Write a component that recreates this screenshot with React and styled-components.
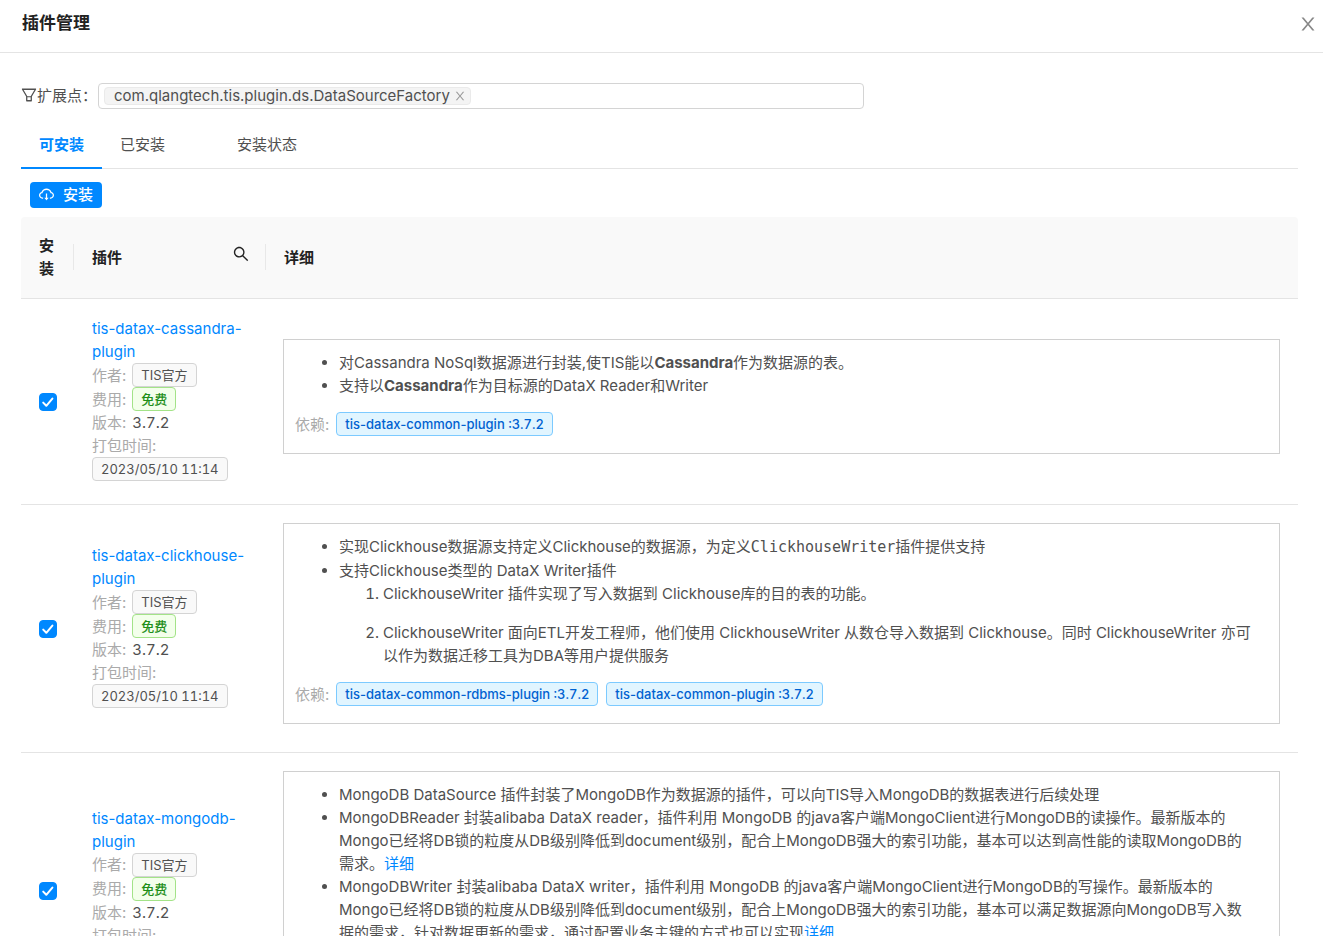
import React, { useState } from 'react';
import styled, { createGlobalStyle } from 'styled-components';
import { AiOutlineCloudDownload, AiOutlineFilter, AiOutlineSearch } from 'react-icons/ai';

const GlobalStyle = createGlobalStyle`
  *, *::before, *::after {
    box-sizing: border-box;
  }
  body {
    margin: 0;
    background: #fff;
    color: #505050;
    font-family: Inter, "Noto Sans CJK SC", sans-serif;
    font-size: 15px;
    line-height: 23px;
  }
  button, input {
    font: inherit;
  }
`;

const Link = styled.a`
  color: #0088ff;
  text-decoration: none;
`;

const VERSION = '3.7.2';

// the glyphs sit inside a 64 unit margin, crop it away
const ICON_BOX = '64 64 896 896';

const plugins = [
  {
    name: 'tis-datax-cassandra-plugin',
    deps: ['tis-datax-common-plugin'],
    detail: (
      <>
        <li>
          对Cassandra NoSql数据源进行封装,使TIS能以<strong>Cassandra</strong>作为数据源的表。
        </li>
        <li>
          支持以<strong>Cassandra</strong>作为目标源的DataX Reader和Writer
        </li>
      </>
    ),
  },
  {
    name: 'tis-datax-clickhouse-plugin',
    deps: ['tis-datax-common-rdbms-plugin', 'tis-datax-common-plugin'],
    detail: (
      <>
        <li>
          实现Clickhouse数据源支持定义Clickhouse的数据源，为定义<code>ClickhouseWriter</code>插件提供支持
        </li>
        <li>
          支持Clickhouse类型的 DataX Writer插件
          <ol>
            <li>ClickhouseWriter 插件实现了写入数据到 Clickhouse库的目的表的功能。</li>
            <li>
              ClickhouseWriter 面向ETL开发工程师，他们使用 ClickhouseWriter 从数仓导入数据到
              Clickhouse。同时 ClickhouseWriter 亦可以作为数据迁移工具为DBA等用户提供服务
            </li>
          </ol>
        </li>
      </>
    ),
  },
  {
    name: 'tis-datax-mongodb-plugin',
    deps: ['tis-datax-common-plugin'],
    detail: (
      <>
        <li>MongoDB DataSource 插件封装了MongoDB作为数据源的插件，可以向TIS导入MongoDB的数据表进行后续处理</li>
        <li>
          MongoDBReader 封装alibaba DataX reader，插件利用 MongoDB
          的java客户端MongoClient进行MongoDB的读操作。最新版本的Mongo已经将DB锁的粒度从DB级别降低到document级别，配合上MongoDB强大的索引功能，基本可以达到高性能的读取MongoDB的需求。
          <Link href="#reader">详细</Link>
        </li>
        <li>
          MongoDBWriter 封装alibaba DataX writer，插件利用 MongoDB
          的java客户端MongoClient进行MongoDB的写操作。最新版本的Mongo已经将DB锁的粒度从DB级别降低到document级别，配合上MongoDB强大的索引功能，基本可以满足数据源向MongoDB写入数据的需求，针对数据更新的需求，通过配置业务主键的方式也可以实现
          <Link href="#writer">详细</Link>
        </li>
      </>
    ),
  },
];

const CloseIcon = () => (
  <svg viewBox={ICON_BOX} width="1em" height="1em" fill="currentColor" aria-hidden="true">
    <path d="M563.8 512l262.5-312.9c4.4-5.2.7-13.1-6.1-13.1h-79.8c-4.7 0-9.2 2.1-12.3 5.7L511.6 449.8 295.1 191.7c-3-3.6-7.5-5.7-12.3-5.7H203c-6.8 0-10.5 7.9-6.1 13.1L459.4 512 196.9 824.9A7.95 7.95 0 00203 838h79.8c4.7 0 9.2-2.1 12.3-5.7l216.5-258.1 216.5 258.1c3 3.6 7.5 5.7 12.3 5.7h79.8c6.8 0 10.5-7.9 6.1-13.1L563.8 512z" />
  </svg>
);

const PluginRow = ({ plugin }) => {
  const [checked, setChecked] = useState(true);
  return (
    <tr>
      <Cell>
        <CheckLabel>
          <Checkbox
            aria-label={plugin.name}
            checked={checked}
            onChange={(e) => setChecked(e.target.checked)}
          />
          <CheckMark viewBox="0 0 18 18" aria-hidden="true">
            <path d="M4.2 9.6 7.3 12.8 13.4 5.6" />
          </CheckMark>
        </CheckLabel>
      </Cell>
      <Cell>
        <Meta>
          <Link href={`#${plugin.name}`}>{plugin.name}</Link>
          <MetaLine $tagged>
            <Muted>作者:</Muted>
            <Tag>TIS官方</Tag>
          </MetaLine>
          <MetaLine $tagged>
            <Muted>费用:</Muted>
            <Tag $tone="green">免费</Tag>
          </MetaLine>
          <MetaLine>
            <Muted>版本:</Muted>
            <Digits>{VERSION}</Digits>
          </MetaLine>
          <MetaLine>
            <Muted>打包时间:</Muted>
          </MetaLine>
          <MetaLine $tagged>
            <Tag>
              <Digits>2023/05/10 11:14</Digits>
            </Tag>
          </MetaLine>
        </Meta>
      </Cell>
      <Cell>
        <Detail>
          <DetailList>{plugin.detail}</DetailList>
          <Deps>
            <Muted>依赖:</Muted>
            {plugin.deps.map((dep) => (
              <Tag key={dep} $tone="blue">
                {dep} <Digits>:{VERSION}</Digits>
              </Tag>
            ))}
          </Deps>
        </Detail>
      </Cell>
    </tr>
  );
};

const App = () => (
  <Drawer>
    <GlobalStyle />
    <Header>
      <Title>插件管理</Title>
      <CloseButton aria-label="关闭">
        <CloseIcon />
      </CloseButton>
    </Header>
    <Body>
      <FilterRow>
        <FilterLabel htmlFor="extend-point">
          <AiOutlineFilter viewBox={ICON_BOX} />
          扩展点：
        </FilterLabel>
        <SelectBox>
          <Chip>
            com.qlangtech.tis.plugin.ds.DataSourceFactory
            <ChipRemove aria-label="移除">
              <CloseIcon />
            </ChipRemove>
          </Chip>
          <SelectInput id="extend-point" />
        </SelectBox>
      </FilterRow>
      <Tabs role="tablist">
        <Tab role="tab" aria-selected="true" $active>
          可安装
        </Tab>
        <Tab role="tab" aria-selected="false">
          已安装
        </Tab>
        <Tab role="tab" aria-selected="false" $spaced>
          安装状态
        </Tab>
      </Tabs>
      <Toolbar>
        <InstallButton>
          <AiOutlineCloudDownload viewBox={ICON_BOX} />
          安装
        </InstallButton>
      </Toolbar>
      <Table>
        <colgroup>
          <CheckCol />
          <PluginCol />
          <col />
        </colgroup>
        <thead>
          <tr>
            <HeadCell>
              <HeadInner $divided>安装</HeadInner>
            </HeadCell>
            <HeadCell>
              <HeadInner $divided>
                插件
                <SearchButton aria-label="搜索">
                  <AiOutlineSearch viewBox={ICON_BOX} />
                </SearchButton>
              </HeadInner>
            </HeadCell>
            <HeadCell>
              <HeadInner>详细</HeadInner>
            </HeadCell>
          </tr>
        </thead>
        <tbody>
          {plugins.map((plugin) => (
            <PluginRow key={plugin.name} plugin={plugin} />
          ))}
        </tbody>
      </Table>
    </Body>
  </Drawer>
);

const Drawer = styled.div`
  display: flex;
  flex-direction: column;
  height: 100vh;
`;

const Header = styled.header`
  display: flex;
  align-items: center;
  justify-content: space-between;
  flex: none;
  padding: 11px 6px 17px 22px;
  border-bottom: 1px solid #e4e4e4;
`;

const Title = styled.h1`
  margin: 0;
  color: #222;
  font-size: 17px;
  font-weight: 600;
  line-height: 24px;
`;

const CloseButton = styled.button`
  display: flex;
  padding: 2px 0 0;
  border: 0;
  background: none;
  color: #888;
  font-size: 18px;
  cursor: pointer;
`;

const Body = styled.main`
  flex: 1;
  min-height: 0;
  padding: 30px 25px 0 21px;
  overflow-y: auto;
  scrollbar-width: none;
`;

const FilterRow = styled.div`
  display: flex;
  align-items: center;
`;

const FilterLabel = styled.label`
  display: flex;
  align-items: center;
  flex: none;
  width: 77px;
  padding-bottom: 2px;
  svg {
    font-size: 16px;
  }
`;

const SelectBox = styled.div`
  display: flex;
  align-items: center;
  width: 60%;
  height: 26px;
  padding: 0 5px;
  border: 1px solid #d4d4d4;
  border-radius: 4px;
`;

const Chip = styled.span`
  display: flex;
  align-items: center;
  flex: none;
  gap: 4px;
  height: 18px;
  padding: 0 4px 0 9px;
  border: 1px solid #eaeaea;
  border-radius: 4px;
  background: #f4f4f4;
  line-height: 16px;
`;

const ChipRemove = styled.button`
  display: flex;
  padding: 0;
  border: 0;
  background: none;
  color: #999;
  font-size: 12px;
  cursor: pointer;
`;

const SelectInput = styled.input`
  flex: 1;
  min-width: 0;
  height: 20px;
  border: 0;
  outline: 0;
  background: none;
`;

const Tabs = styled.div`
  display: flex;
  margin-top: 11px;
  border-bottom: 1px solid #e4e4e4;
`;

const Tab = styled.button`
  margin: 0 0 -1px ${(props) => (props.$spaced ? '36px' : '0')};
  padding: 13px 18px 11px;
  border: 0;
  border-bottom: 2px solid ${(props) => (props.$active ? '#0088ff' : 'transparent')};
  background: none;
  color: ${(props) => (props.$active ? '#0088ff' : '#505050')};
  font-weight: ${(props) => (props.$active ? 600 : 400)};
  cursor: pointer;
`;

const Toolbar = styled.div`
  display: flex;
  padding: 13px 9px 9px;
`;

const InstallButton = styled.button`
  display: flex;
  align-items: center;
  gap: 9px;
  height: 26px;
  padding: 0 9px 2px;
  border: 0;
  border-radius: 4px;
  background: #0088ff;
  color: #fff;
  font-weight: 500;
  cursor: pointer;
  svg {
    font-size: 15px;
  }
`;

const Table = styled.table`
  width: 100%;
  table-layout: fixed;
  border-collapse: separate;
  border-spacing: 0;
`;

const CheckCol = styled.col`
  width: 53px;
`;

const PluginCol = styled.col`
  width: 192px;
`;

const HeadCell = styled.th`
  padding: 17px 0 18px;
  border-bottom: 1px solid #e4e4e4;
  background: #f9f9f9;
  color: #222;
  font-weight: 600;
  text-align: left;
  &:first-child {
    border-top-left-radius: 4px;
  }
  &:last-child {
    border-top-right-radius: 4px;
  }
`;

const HeadInner = styled.div`
  display: flex;
  align-items: center;
  justify-content: space-between;
  min-height: 26px;
  padding: 0 17px 0 18px;
  background: ${(props) =>
    props.$divided ? 'linear-gradient(#e8e8e8, #e8e8e8) right center / 1px 26px no-repeat' : 'none'};
`;

const SearchButton = styled.button`
  display: flex;
  padding: 0 0 6px;
  border: 0;
  background: none;
  color: #222;
  font-size: 16px;
  cursor: pointer;
`;

const Cell = styled.td`
  padding: 18px;
  border-bottom: 1px solid #e4e4e4;
  vertical-align: middle;
  &:last-child {
    padding-left: 17px;
  }
`;

const CheckLabel = styled.label`
  display: grid;
  width: 18px;
`;

const Checkbox = styled.input.attrs({ type: 'checkbox' })`
  grid-area: 1 / 1;
  width: 18px;
  height: 18px;
  margin: 0;
  border: 1px solid #bbb;
  border-radius: 4px;
  appearance: none;
  &:checked {
    border-color: #0088ff;
    background: #0088ff;
  }
`;

const CheckMark = styled.svg`
  grid-area: 1 / 1;
  width: 18px;
  height: 18px;
  fill: none;
  stroke: #fff;
  stroke-width: 2;
  stroke-linecap: round;
  stroke-linejoin: round;
  pointer-events: none;
`;

const Meta = styled.div`
  padding-bottom: 5px;
`;

const MetaLine = styled.div`
  display: flex;
  align-items: center;
  gap: 6px;
  height: ${(props) => (props.$tagged ? '24px' : '23px')};
`;

const Muted = styled.span`
  color: #aaa;
`;

const Digits = styled.span`
  font-variant-numeric: tabular-nums;
`;

const tones = {
  plain: { color: '#505050', border: '#d4d4d4', background: '#f9f9f9' },
  green: { color: '#1f8f1a', border: '#a3e388', background: '#f3ffeb' },
  blue: { color: '#0062d1', border: '#7ccaff', background: '#e1f5ff' },
};

const Tag = styled.span`
  height: 24px;
  padding: 0 8px;
  border: 1px solid ${(props) => tones[props.$tone || 'plain'].border};
  border-radius: 4px;
  background: ${(props) => tones[props.$tone || 'plain'].background};
  color: ${(props) => tones[props.$tone || 'plain'].color};
  font-size: 13px;
  font-weight: ${(props) => (props.$tone ? 500 : 400)};
  line-height: 22px;
  white-space: nowrap;
`;

const Detail = styled.div`
  margin-bottom: 10px;
  padding: 11px 11px 17px;
  border: 1px solid #d0d0d0;
`;

const DetailList = styled.ul`
  margin: 0 0 15px;
  padding: 0 16px 0 44px;
  ol {
    margin: 0;
    padding-left: 44px;
  }
  ol > li + li {
    margin-top: 16px;
  }
  strong {
    font-weight: 700;
  }
  code {
    font-family: "DejaVu Sans Mono", monospace;
    font-size: 15px;
  }
`;

const Deps = styled.div`
  display: flex;
  align-items: center;
  gap: 8px;
  ${Muted} {
    margin-right: -1px;
  }
`;

export default App;
